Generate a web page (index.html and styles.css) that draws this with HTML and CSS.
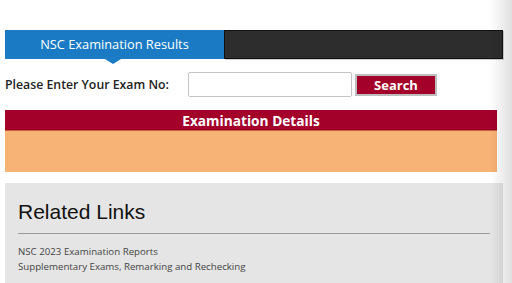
FILE: index.html
```html
<!DOCTYPE html>
<html>
<head>
<meta charset="utf-8">
<link rel="stylesheet" href="styles.css">
</head>
<body>
<div class="page">
  <div class="tabs">
    <div class="tab">NSC Examination Results</div>
    <div class="tab-rest"></div>
  </div>
  <div class="search-row">
    <label class="label">Please Enter Your Exam No:</label>
    <input class="exam-input" type="text">
    <button class="search-btn">Search</button>
  </div>
  <div class="details">
    <div class="details-head">Examination Details</div>
    <div class="details-body"></div>
  </div>
  <div class="related">
    <h2 class="related-title">Related Links</h2>
    <div class="related-rule"></div>
    <div class="related-links">
      <a class="rlink">NSC 2023 Examination Reports</a>
      <a class="rlink">Supplementary Exams, Remarking and Rechecking</a>
    </div>
  </div>
</div>
<div class="edge-shade"></div>
</body>
</html>
```
FILE: styles.css
```css
html, body {
  margin: 0;
  padding: 0;
  background: #fff;
  overflow: hidden;
}
body {
  font-family: "Open Sans", "Liberation Sans", sans-serif;
}
.page {
  width: 498px;
  margin-left: 5px;
  padding-top: 30px;
}
.tabs {
  display: flex;
  height: 29px;
}
.tab {
  position: relative;
  width: 219px;
  background: #1a7bc4;
  color: #fff;
  font-size: 12.8px;
  line-height: 29px;
  text-align: center;
}
.tab::after {
  content: "";
  position: absolute;
  left: 100px;
  top: 29px;
  border-left: 8px solid transparent;
  border-right: 8px solid transparent;
  border-top: 5px solid #1a7bc4;
}
.tab-rest {
  flex: 1;
  background: #2d2d2d;
  border: 1px solid #111;
  box-shadow: 1px 1px 0 #cfcfcf;
}
.search-row {
  display: flex;
  align-items: center;
  margin-top: 13px;
  height: 25px;
}
.label {
  width: 183px;
  font-size: 12.3px;
  font-weight: 600;
  color: #222;
}
.exam-input {
  box-sizing: border-box;
  width: 164px;
  height: 25px;
  margin: 0;
  border: 1px solid #c4c4c4;
  border-radius: 2px;
  background: #fff;
}
.search-btn {
  box-sizing: border-box;
  width: 82px;
  height: 22px;
  margin: 0 0 0 3px;
  padding: 0;
  background: #a3002a;
  border: 2px solid #bdbdbd;
  color: #fff;
  font-family: "Open Sans", "Liberation Sans", sans-serif;
  font-size: 13px;
  font-weight: 700;
}
.details {
  width: 492px;
  margin-top: 13px;
}
.details-head {
  height: 21px;
  background: #a3002a;
  color: #fff;
  font-size: 13.7px;
  font-weight: 700;
  line-height: 21px;
  text-align: center;
  border-bottom: 1px solid #c0603a;
  box-sizing: border-box;
}
.details-body {
  height: 41px;
  background: #f7b275;
}
.related {
  margin-top: 11px;
  height: 110px;
  background: #e5e5e5;
  padding: 0 13px;
  overflow: hidden;
}
.related-title {
  margin: 0;
  padding-top: 17px;
  font-family: "Liberation Sans", Arial, sans-serif;
  font-weight: 400;
  font-size: 21px;
  line-height: 24px;
  color: #111;
}
.related-rule {
  width: 472px;
  height: 1px;
  background: #999;
  margin-top: 9px;
}
.related-links {
  display: flex;
  flex-direction: column;
  padding-top: 10px;
}
.rlink {
  font-size: 9.7px;
  line-height: 15px;
  color: #444;
}
.edge-shade {
  position: fixed;
  top: 0;
  right: 0;
  width: 22px;
  height: 100%;
  background: linear-gradient(to right, rgba(0,0,0,0), rgba(0,0,0,0.12));
  pointer-events: none;
}
```
